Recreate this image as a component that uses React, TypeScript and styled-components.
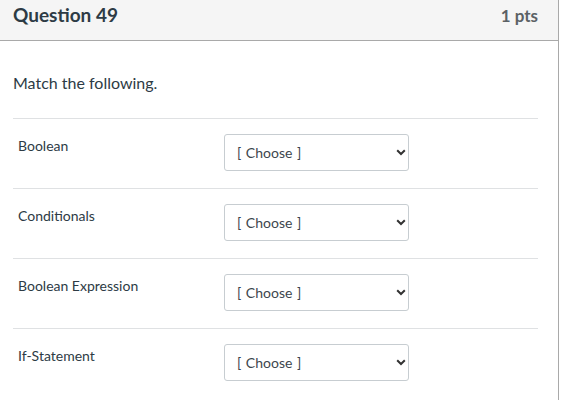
import styled, { createGlobalStyle } from 'styled-components'

const Global = createGlobalStyle`
  body {
    margin: 0;
    background: #fff;
    font-family: Lato, "Liberation Sans", sans-serif;
    color: #2d3b45;
  }
`

const Panel = styled.div`
  width: 558px;
  height: 400px;
  border-right: 1px solid #a9a9a9;
  overflow: hidden;
`

const Header = styled.header`
  height: 40px;
  background: #f5f5f5;
  border-bottom: 1px solid #a9a9a9;
  display: flex;
  align-items: center;
  justify-content: space-between;
  padding: 0 20px 0 13px;
`

const Title = styled.h2`
  margin: 0 0 11px;
  font-size: 19px;
  font-weight: 700;
  color: #2d3b45;
`

const Points = styled.span`
  margin-bottom: 9px;
  font-size: 17px;
  font-weight: 700;
  color: #5b6165;
`

const Body = styled.div`
  padding: 0 20px 0 13px;
`

const Prompt = styled.p`
  margin: 0;
  padding: 32px 0 25px;
  font-size: 16px;
  line-height: 20px;
`

const Row = styled.div`
  display: grid;
  grid-template-columns: 211px 185px;
  height: 69px;
  border-top: 1px solid #dfe1e3;
`

const Label = styled.div`
  padding: 18px 0 0 5px;
  font-size: 14px;
  line-height: 17px;
  color: #2d3b45;
`

const SelectWrap = styled.div`
  position: relative;
  margin-top: 15px;
  height: 37px;
`

const Select = styled.select`
  appearance: none;
  width: 185px;
  height: 37px;
  border: 1px solid #c7cdd1;
  border-radius: 3px;
  background: #fff;
  padding: 0 0 0 12px;
  font-family: Lato, "Liberation Sans", sans-serif;
  font-size: 14px;
  word-spacing: 1px;
  color: #3d464d;
`

const Chevron = styled.svg`
  position: absolute;
  right: 3px;
  top: 15px;
  pointer-events: none;
`

const items = ['Boolean', 'Conditionals', 'Boolean Expression', 'If-Statement']

export default function App() {
  return (
    <>
      <Global />
      <Panel>
        <Header>
          <Title>Question 49</Title>
          <Points>1 pts</Points>
        </Header>
        <Body>
          <Prompt>Match the following.</Prompt>
          {items.map((item) => (
            <Row key={item}>
              <Label>{item}</Label>
              <SelectWrap>
                <Select defaultValue="">
                  <option value="">[ Choose ]</option>
                </Select>
                <Chevron width="10" height="7" viewBox="0 0 10 7">
                  <path d="M1.2 1.2 L5 5 L8.8 1.2" fill="none" stroke="#333" strokeWidth="2" />
                </Chevron>
              </SelectWrap>
            </Row>
          ))}
        </Body>
      </Panel>
    </>
  )
}
